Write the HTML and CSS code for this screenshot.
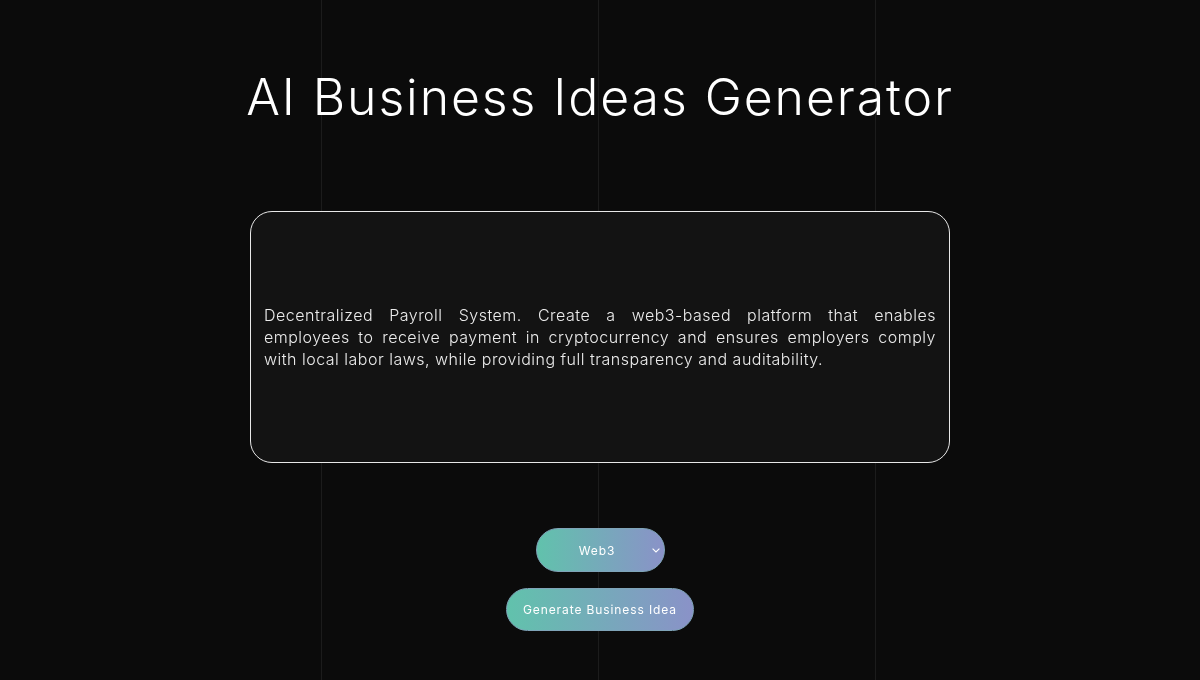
FILE: index.html
```html
<!DOCTYPE html>
<html lang="en">
<head>
    <meta charset="UTF-8">
    <meta name="viewport" content="width=device-width, initial-scale=1.0">
    <title>AI Business Ideas Generator</title>
    <link rel="stylesheet" href="styles.css">
</head>
<body>
    <!-- background column guides -->
    <div class="guides">
        <span></span><span></span><span></span><span></span>
    </div>

    <main class="page">
        <h1 class="title">AI Business Ideas Generator</h1>

        <div class="idea-box">
            <p class="idea-text">Decentralized Payroll System. Create a web3-based platform that enables employees to receive payment in cryptocurrency and ensures employers comply with local labor laws, while providing full transparency and auditability.</p>
        </div>

        <div class="controls">
            <div class="select-wrap">
                <select class="pill select">
                    <option>Web3</option>
                    <option>Fintech</option>
                    <option>SaaS</option>
                    <option>E-commerce</option>
                </select>
                <svg class="chevron" width="8" height="5" viewBox="0 0 8 5">
                    <path d="M0.6 0.6 L4 4 L7.4 0.6" fill="none" stroke="#fff" stroke-width="1.1"/>
                </svg>
            </div>
            <button class="pill btn">Generate Business Idea</button>
        </div>
    </main>
</body>
</html>
```

FILE: styles.css
```css
body {
    margin: 0;
    background: #0b0b0b;
    color: #fff;
    font-family: "Inter", "DejaVu Sans", sans-serif;
    height: 680px;
    overflow: hidden;
}
.guides {
    position: fixed;
    top: 0;
    bottom: 0;
    left: 44px;
    right: 48px;
    display: grid;
    grid-template-columns: repeat(4, 1fr);
    pointer-events: none;
}
.guides span {
    border-left: 1px solid #1c1c1c;
}
.guides span:first-child {
    border-left: none;
}
.page {
    position: relative;
    display: flex;
    flex-direction: column;
    align-items: center;
}
.title {
    margin: 69px 0 0;
    font-size: 50px;
    line-height: 56px;
    font-weight: 300;
    letter-spacing: 1.9px;
}
.idea-box {
    margin-top: 86px;
    width: 698px;
    height: 250px;
    border: 1px solid #e8e8e8;
    border-radius: 22px;
    background: #131313;
    display: flex;
    align-items: center;
}
.idea-text {
    margin: 0 13px;
    font-size: 16px;
    line-height: 22px;
    font-weight: 300;
    text-align: justify;
    letter-spacing: 0.5px;
    color: #ececec;
}
.controls {
    margin-top: 65px;
    display: flex;
    flex-direction: column;
    align-items: center;
    gap: 16px;
}
.pill {
    border: 1px solid #7fa4b8;
    border-radius: 22px;
    background: linear-gradient(90deg, #61c2ac 0%, #8a92c8 100%);
    color: #fff;
    font-family: inherit;
    font-size: 12px;
    letter-spacing: 0.9px;
    cursor: pointer;
}
.select-wrap {
    position: relative;
}
.select {
    appearance: none;
    -webkit-appearance: none;
    width: 129px;
    height: 44px;
    text-align: center;
    text-align-last: center;
    padding: 0 6px 0 0;
    outline: none;
}
.chevron {
    position: absolute;
    right: 5px;
    top: 20px;
}
.btn {
    width: 188px;
    height: 43px;
    padding: 0;
}
```
